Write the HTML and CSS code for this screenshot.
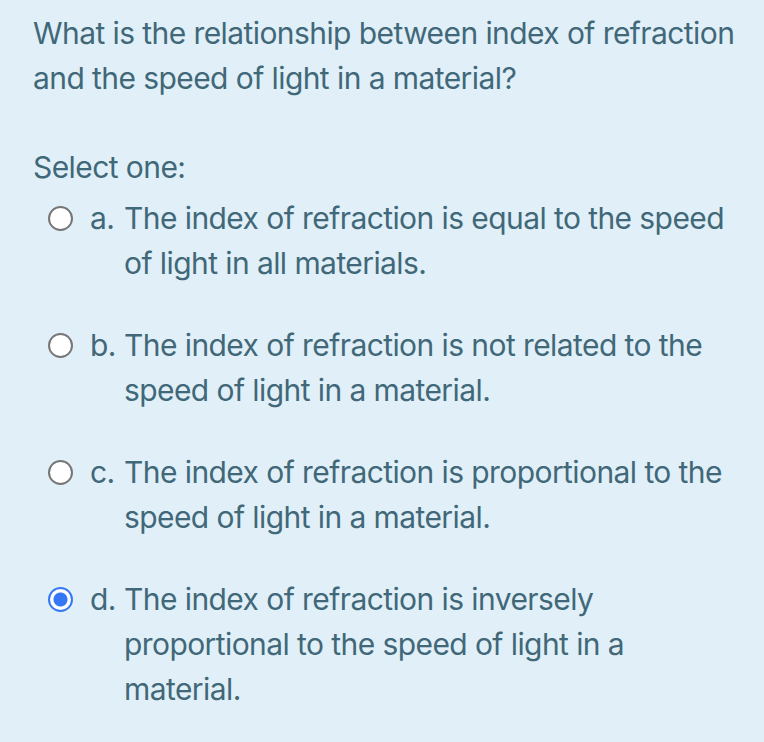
FILE: index.html
```html
<!DOCTYPE html>
<html>
<head>
<meta charset="utf-8">
<link rel="stylesheet" href="styles.css">
</head>
<body>
<div class="formulation">
  <div class="qtext">What is the relationship between index of refraction and the speed of light in a material?</div>
  <div class="ablock">
    <div class="prompt">Select one:</div>
    <div class="answer">
      <div class="option">
        <span class="radio"></span>
        <span class="num">a.</span>
        <div class="text">The index of refraction is equal to the speed of light in all materials.</div>
      </div>
      <div class="option">
        <span class="radio"></span>
        <span class="num">b.</span>
        <div class="text">The index of refraction is not related to the speed of light in a material.</div>
      </div>
      <div class="option">
        <span class="radio"></span>
        <span class="num">c.</span>
        <div class="text">The index of refraction is proportional to the speed of light in a material.</div>
      </div>
      <div class="option">
        <span class="radio checked"></span>
        <span class="num">d.</span>
        <div class="text">The index of refraction is inversely proportional to the speed of light in a material.</div>
      </div>
    </div>
  </div>
</div>
</body>
</html>
```
FILE: styles.css
```css
html, body {
  margin: 0;
  padding: 0;
  background: #e1f0f8;
}
.formulation {
  background: #e1f0f8;
  color: #416879;
  font-family: Inter, "Open Sans", sans-serif;
  font-size: 30px;
  letter-spacing: -0.58px;
  line-height: 45px;
  padding: 11px 26px 20px 33px;
  min-height: 710px;
}
.qtext {
  margin-bottom: 44px;
}
.prompt {
  margin-bottom: 6px;
}
.option {
  display: flex;
  align-items: flex-start;
  margin-bottom: 37px;
}
.radio {
  flex: none;
  width: 21px;
  height: 21px;
  margin: 10px 0 0 15px;
  border: 2px solid #767676;
  border-radius: 50%;
  background: #fff;
}
.radio.checked {
  border: 2px solid #3478f6;
  background: radial-gradient(circle, #3478f6 0 6.5px, #fff 7.5px);
}
.num {
  flex: none;
  width: 34px;
  margin-left: 17px;
}
.text {
  flex: 1;
}
```
